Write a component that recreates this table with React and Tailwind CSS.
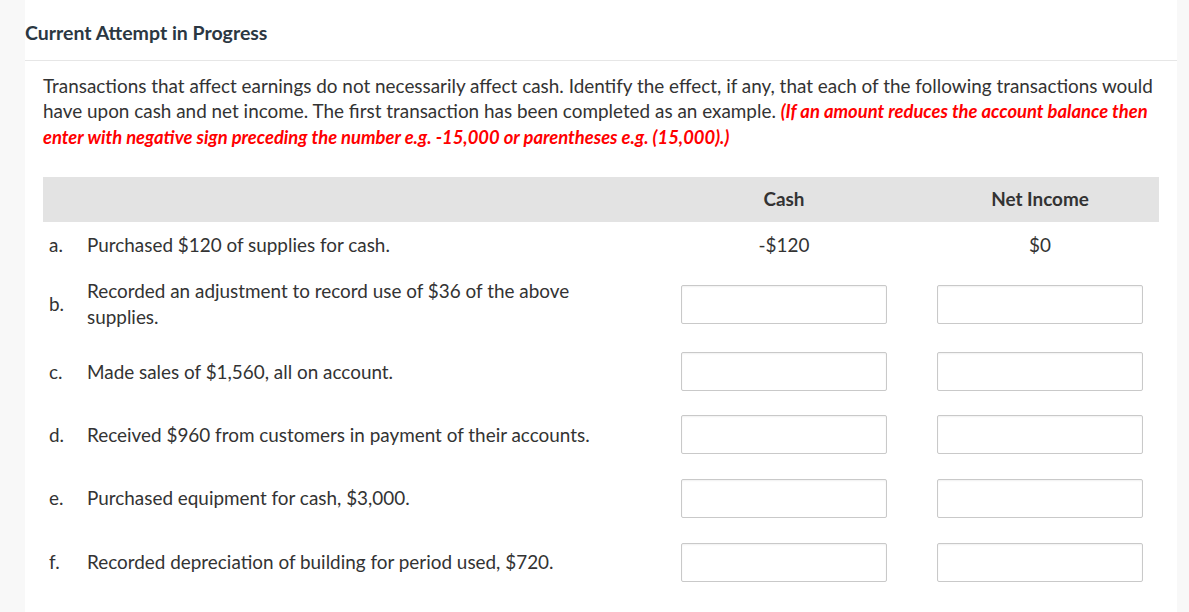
import React from "react";

const rows = [
  { k: "a.", t: "Purchased $120 of supplies for cash.", cash: "-$120", ni: "$0", h: "h-[46px]" },
  { k: "b.", t: "Recorded an adjustment to record use of $36 of the above supplies.", h: "h-[72px]" },
  { k: "c.", t: "Made sales of $1,560, all on account.", h: "h-[63px]" },
  { k: "d.", t: "Received $960 from customers in payment of their accounts.", h: "h-[63px]" },
  { k: "e.", t: "Purchased equipment for cash, $3,000.", h: "h-[64px]" },
  { k: "f.", t: "Recorded depreciation of building for period used, $720.", h: "h-[64px]" },
];

function Input() {
  return (
    <input
      type="text"
      className="w-[206px] h-[39px] border border-[#c9c9c9] rounded-[2px] bg-white shadow-[inset_0_1px_2px_rgba(0,0,0,0.06)] outline-none"
    />
  );
}

export default function App() {
  return (
    <div
      className="flex min-h-screen w-full bg-[#f8f8f8] text-[#333]"
      style={{ fontFamily: "Lato, 'Open Sans', sans-serif" }}
    >
      <div className="w-[25px] shrink-0" />
      <div className="flex-1 bg-white">
        <div className="pt-[20px] pb-[15px] border-b border-[#e6e6e6]">
          <h1 className="text-[19.5px] leading-[25px] font-bold text-[#2b3742]">Current Attempt in Progress</h1>
        </div>
        <div className="px-[18px]">
          <p className="mt-[12px] text-[18.9px] leading-[25px] text-[#333]">
            Transactions that affect earnings do not necessarily affect cash. Identify the effect, if any, that each of the following transactions would have upon cash and net income. The first transaction has been completed as an example.{" "}
            <span className="font-bold italic text-[#ff0000] text-[18.4px]">
              (If an amount reduces the account balance then enter with negative sign preceding the number e.g. -15,000 or parentheses e.g. (15,000).)
            </span>
          </p>
          <div className="mt-[27px] text-[18.9px]">
            <div className="grid grid-cols-[613px_256px_9px_238px] h-[45px] items-center bg-[#e3e3e3] font-bold">
              <div />
              <div className="text-center">Cash</div>
              <div />
              <div className="text-center">Net Income</div>
            </div>
            {rows.map((r) => (
              <div key={r.k} className={`grid grid-cols-[613px_256px_9px_238px] items-center ${r.h}`}>
                <div className="flex items-center pl-[6px]">
                  <span className="w-[38px] shrink-0 leading-[26px]">{r.k}</span>
                  <span className="leading-[26px] max-w-[530px]">{r.t}</span>
                </div>
                <div className="flex justify-center">{r.cash ? <span>{r.cash}</span> : <Input />}</div>
                <div />
                <div className="flex justify-center">{r.ni ? <span>{r.ni}</span> : <Input />}</div>
              </div>
            ))}
          </div>
        </div>
      </div>
      <div className="w-[12px] shrink-0" />
    </div>
  );
}
